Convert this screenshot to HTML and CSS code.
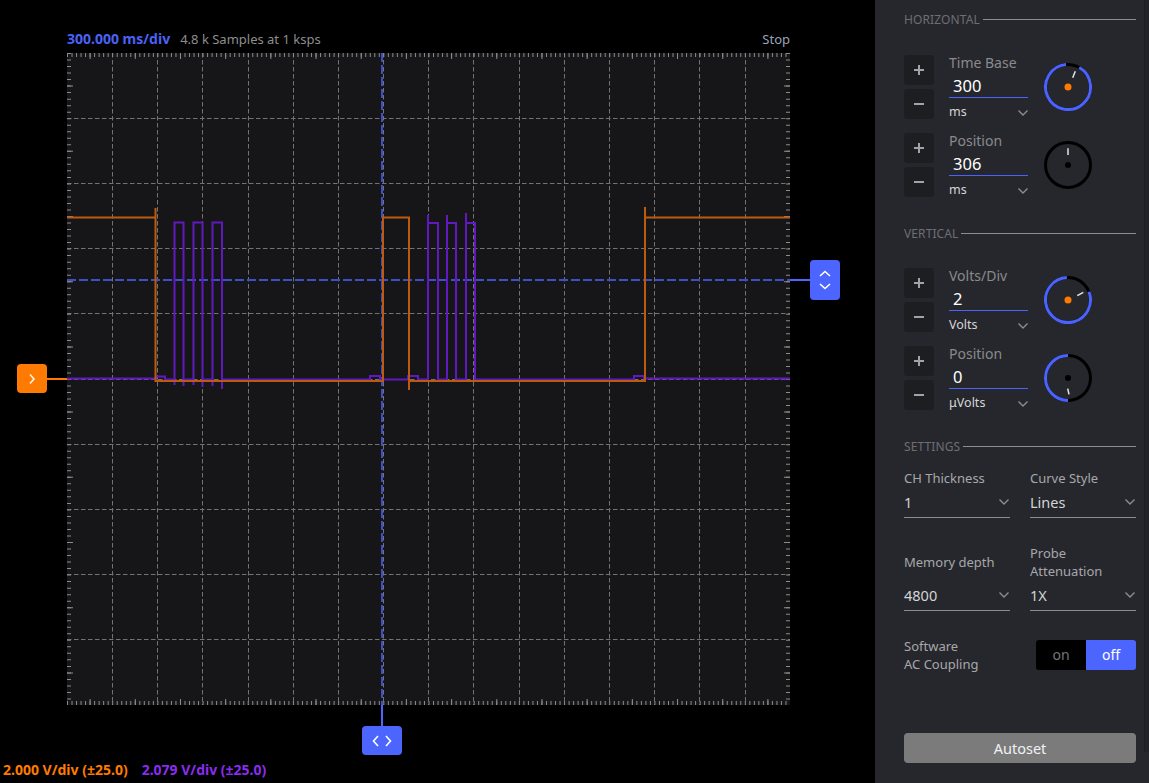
FILE: index.html
```html
<!DOCTYPE html>
<html>
<head>
<meta charset="utf-8">
<title>Scope</title>
<link rel="stylesheet" href="styles.css">
</head>
<body>
<div class="app">
  <section class="scope">
    <div class="scope-head">
      <div><span class="tb">300.000 ms/div</span><span class="samples">4.8 k Samples at 1 ksps</span></div>
      <span class="state">Stop</span>
    </div>
    <div class="plot">
      <svg class="plot-svg" viewBox="67 53 723 652" width="723" height="652">
        <rect x="67" y="53" width="723" height="652" fill="#161619"/>
        <g class="grid" fill="none" stroke="#727272" stroke-width="1" stroke-dasharray="4.5 2.5">
          <path d="M112.5,53V705M157.5,53V705M202.5,53V705M248.5,53V705M293.5,53V705M338.5,53V705M383.5,53V705M428.5,53V705M473.5,53V705M519.5,53V705M564.5,53V705M609.5,53V705M654.5,53V705M699.5,53V705M745.5,53V705"/>
          <path d="M67,118.5H790M67,183.5H790M67,248.5H790M67,313.5H790M67,379.5H790M67,444.5H790M67,509.5H790M67,574.5H790M67,639.5H790"/>
        </g>
        <g class="ticks" fill="none" stroke="#8c8c8c">
          <line x1="67" y1="55" x2="790" y2="55" stroke-width="4" stroke-dasharray="1 3.51875"/>
          <line x1="67" y1="56" x2="790" y2="56" stroke-width="6" stroke-dasharray="1 44.1875" stroke-dashoffset="-22.6"/>
          <line x1="67" y1="703" x2="790" y2="703" stroke-width="4" stroke-dasharray="1 3.51875"/>
          <line x1="67" y1="702" x2="790" y2="702" stroke-width="6" stroke-dasharray="1 44.1875" stroke-dashoffset="-22.6"/>
          <line x1="69" y1="53" x2="69" y2="705" stroke-width="4" stroke-dasharray="1 5.52"/>
          <line x1="70" y1="53" x2="70" y2="705" stroke-width="6" stroke-dasharray="1 64.2" stroke-dashoffset="-32.6"/>
          <line x1="788" y1="53" x2="788" y2="705" stroke-width="4" stroke-dasharray="1 5.52"/>
          <line x1="787" y1="53" x2="787" y2="705" stroke-width="6" stroke-dasharray="1 64.2" stroke-dashoffset="-32.6"/>
        </g>
        <g fill="none" stroke="#3c4fc8" stroke-width="2" stroke-dasharray="9 3">
          <line x1="67" y1="280" x2="790" y2="280"/>
          <line x1="382" y1="53" x2="382" y2="705"/>
        </g>
        <path class="trace-ch2" fill="none" stroke="#6019c2" stroke-width="2" d="M67,378.5H156V376.5H165V379.5H174.5V385V222.5H183.5V386V379.5H193.5V385V222.5H202.5V387V379.5H212.5V386V222.5H222V389V379.5H370V376H380V379.5H408V376H418V379.5H428V215V223H438V380V379.5H447V215V223H456V380V379.5H466V213V223H475V379.5H634V376H644V378.5H790"/>
        <path class="trace-ch1" fill="none" stroke="#bd5a10" stroke-width="2" d="M67,217.5H155.5V208V381H383V217.5H409V390V381H645V207V217.5H790"/>
      </svg>

      <div class="lead ch1-lead"></div>
      <div class="ch1-marker">
        <svg width="8" height="12" viewBox="0 0 8 12"><polyline points="2,1.5 6,6 2,10.5" fill="none" stroke="#fff4e6" stroke-width="1.6"/></svg>
      </div>

      <div class="lead lvl-lead"></div>
      <div class="trig-level">
        <svg width="14" height="22" viewBox="0 0 14 22"><polyline points="2,7 7,2.5 12,7" fill="none" stroke="#fff" stroke-width="1.6"/><polyline points="2,15 7,19.5 12,15" fill="none" stroke="#fff" stroke-width="1.6"/></svg>
      </div>

      <div class="lead pos-lead"></div>
      <div class="trig-pos">
        <svg width="22" height="14" viewBox="0 0 22 14"><polyline points="7,2 2.5,7 7,12" fill="none" stroke="#fff" stroke-width="1.6"/><polyline points="15,2 19.5,7 15,12" fill="none" stroke="#fff" stroke-width="1.6"/></svg>
      </div>
    </div>
    <div class="scope-foot">
      <span class="ch1">2.000 V/div (±25.0)</span>
      <span class="ch2">2.079 V/div (±25.0)</span>
    </div>
  </section>

  <aside class="panel">
    <div class="scrollbar"></div>
    <div class="sec">HORIZONTAL</div>

    <div class="ctrl first">
      <div class="steps">
        <div class="step"><svg width="12" height="12" viewBox="0 0 12 12"><path d="M1,6H11M6,1V11" stroke="#a3a3a3" stroke-width="2"/></svg></div>
        <div class="step"><svg width="12" height="12" viewBox="0 0 12 12"><path d="M1,6H11" stroke="#a3a3a3" stroke-width="2"/></svg></div>
      </div>
      <div class="field">
        <div class="flabel">Time Base</div>
        <div class="finput">300</div>
        <div class="funits"><span>ms</span><svg width="10" height="6" viewBox="0 0 10 6"><polyline points="0.5,0.5 5,5 9.5,0.5" fill="none" stroke="#8d8d8d" stroke-width="1.4"/></svg></div>
      </div>
      <svg class="knob" width="50" height="50" viewBox="0 0 50 50">
        <circle cx="25" cy="25" r="22.5" fill="none" stroke="#000" stroke-width="3"/>
        <path d="M36.25,5.51A22.5,22.5 0 1 1 23.04,2.59" fill="none" stroke="#4a63ff" stroke-width="3"/>
        <line x1="29.7" y1="15.7" x2="32.3" y2="9.3" stroke="#e4e4e4" stroke-width="1.5"/>
        <circle cx="25" cy="25" r="3.5" fill="#ff7a00"/>
      </svg>
    </div>

    <div class="ctrl">
      <div class="steps">
        <div class="step"><svg width="12" height="12" viewBox="0 0 12 12"><path d="M1,6H11M6,1V11" stroke="#a3a3a3" stroke-width="2"/></svg></div>
        <div class="step"><svg width="12" height="12" viewBox="0 0 12 12"><path d="M1,6H11" stroke="#a3a3a3" stroke-width="2"/></svg></div>
      </div>
      <div class="field">
        <div class="flabel">Position</div>
        <div class="finput">306</div>
        <div class="funits"><span>ms</span><svg width="10" height="6" viewBox="0 0 10 6"><polyline points="0.5,0.5 5,5 9.5,0.5" fill="none" stroke="#8d8d8d" stroke-width="1.4"/></svg></div>
      </div>
      <svg class="knob" width="50" height="50" viewBox="0 0 50 50">
        <circle cx="25" cy="25" r="22.5" fill="none" stroke="#000" stroke-width="3"/>
        <line x1="25" y1="15" x2="25" y2="8.3" stroke="#e4e4e4" stroke-width="1.5"/>
        <circle cx="25" cy="25" r="3" fill="#000"/>
      </svg>
    </div>

    <div class="sec sec-gap">VERTICAL</div>

    <div class="ctrl first-v">
      <div class="steps">
        <div class="step"><svg width="12" height="12" viewBox="0 0 12 12"><path d="M1,6H11M6,1V11" stroke="#a3a3a3" stroke-width="2"/></svg></div>
        <div class="step"><svg width="12" height="12" viewBox="0 0 12 12"><path d="M1,6H11" stroke="#a3a3a3" stroke-width="2"/></svg></div>
      </div>
      <div class="field">
        <div class="flabel">Volts/Div</div>
        <div class="finput">2</div>
        <div class="funits"><span>Volts</span><svg width="10" height="6" viewBox="0 0 10 6"><polyline points="0.5,0.5 5,5 9.5,0.5" fill="none" stroke="#8d8d8d" stroke-width="1.4"/></svg></div>
      </div>
      <svg class="knob" width="50" height="50" viewBox="0 0 50 50">
        <circle cx="25" cy="25" r="22.5" fill="none" stroke="#000" stroke-width="3"/>
        <path d="M45.95,16.79A22.5,22.5 0 1 1 23.82,2.53" fill="none" stroke="#4a63ff" stroke-width="3"/>
        <line x1="34.3" y1="20.7" x2="40.3" y2="17.3" stroke="#e4e4e4" stroke-width="1.5"/>
        <circle cx="25" cy="25" r="3.5" fill="#ff7a00"/>
      </svg>
    </div>

    <div class="ctrl">
      <div class="steps">
        <div class="step"><svg width="12" height="12" viewBox="0 0 12 12"><path d="M1,6H11M6,1V11" stroke="#a3a3a3" stroke-width="2"/></svg></div>
        <div class="step"><svg width="12" height="12" viewBox="0 0 12 12"><path d="M1,6H11" stroke="#a3a3a3" stroke-width="2"/></svg></div>
      </div>
      <div class="field">
        <div class="flabel">Position</div>
        <div class="finput">0</div>
        <div class="funits"><span>μVolts</span><svg width="10" height="6" viewBox="0 0 10 6"><polyline points="0.5,0.5 5,5 9.5,0.5" fill="none" stroke="#8d8d8d" stroke-width="1.4"/></svg></div>
      </div>
      <svg class="knob" width="50" height="50" viewBox="0 0 50 50">
        <circle cx="25" cy="25" r="22.5" fill="none" stroke="#000" stroke-width="3"/>
        <path d="M25,47.5A22.5,22.5 0 0 1 25,2.5" fill="none" stroke="#4a63ff" stroke-width="3"/>
        <line x1="24.7" y1="35.7" x2="26" y2="41.3" stroke="#e4e4e4" stroke-width="1.5"/>
        <circle cx="25" cy="25" r="3" fill="#000"/>
      </svg>
    </div>

    <div class="sec sec-gap">SETTINGS</div>

    <div class="settings">
      <div class="slabel">CH Thickness</div>
      <div class="slabel">Curve Style</div>
      <div class="select"><span>1</span><svg width="10" height="6" viewBox="0 0 10 6"><polyline points="0.5,0.5 5,5 9.5,0.5" fill="none" stroke="#8d8d8d" stroke-width="1.4"/></svg></div>
      <div class="select"><span>Lines</span><svg width="10" height="6" viewBox="0 0 10 6"><polyline points="0.5,0.5 5,5 9.5,0.5" fill="none" stroke="#8d8d8d" stroke-width="1.4"/></svg></div>
      <div class="slabel row2">Memory depth</div>
      <div class="slabel row2">Probe<br>Attenuation</div>
      <div class="select"><span>4800</span><svg width="10" height="6" viewBox="0 0 10 6"><polyline points="0.5,0.5 5,5 9.5,0.5" fill="none" stroke="#8d8d8d" stroke-width="1.4"/></svg></div>
      <div class="select"><span>1X</span><svg width="10" height="6" viewBox="0 0 10 6"><polyline points="0.5,0.5 5,5 9.5,0.5" fill="none" stroke="#8d8d8d" stroke-width="1.4"/></svg></div>
    </div>

    <div class="coupling">
      <div class="slabel">Software<br>AC Coupling</div>
      <div class="toggle"><span class="t-on">on</span><span class="t-off">off</span></div>
    </div>

    <div class="autoset">Autoset</div>
  </aside>
</div>
</body>
</html>
```

FILE: styles.css
```css
* { box-sizing: border-box; }
html, body { margin: 0; padding: 0; }
body {
  width: 1149px;
  height: 783px;
  overflow: hidden;
  background: #000;
  font-family: "Noto Sans", "Open Sans", sans-serif;
}
.app { display: flex; height: 783px; }

/* ---------- scope ---------- */
.scope {
  width: 875px;
  flex: none;
  padding: 30px 85px 0 67px;
}
.scope-head {
  display: flex;
  justify-content: space-between;
  align-items: center;
  height: 18px;
  line-height: 18px;
  font-size: 14px;
  margin-bottom: 5px;
  white-space: nowrap;
}
.tb { color: #4a62f5; font-weight: 700; }
.samples { color: #8e8e8e; margin-left: 10px; font-size: 13px; }
.state { color: #9aa4b8; font-size: 13px; }

.plot { position: relative; width: 723px; height: 652px; }
.plot-svg { display: block; width: 723px; height: 652px; }

.lead { position: absolute; }
.ch1-lead { left: -20px; top: 325px; width: 20px; height: 2px; background: #ff7a00; }
.ch1-marker {
  position: absolute;
  left: -50px; top: 311px;
  width: 30px; height: 29px;
  background: #ff7a00;
  border-radius: 4px;
  display: flex; align-items: center; justify-content: center;
}
.lvl-lead { left: 723px; top: 226px; width: 20px; height: 2px; background: #4d65ff; }
.trig-level {
  position: absolute;
  left: 743px; top: 207px;
  width: 30px; height: 40px;
  background: #4d65ff;
  border-radius: 4px;
  display: flex; align-items: center; justify-content: center;
}
.pos-lead { left: 314px; top: 652px; width: 2px; height: 21px; background: #4d65ff; }
.trig-pos {
  position: absolute;
  left: 295px; top: 673px;
  width: 40px; height: 29px;
  background: #4d65ff;
  border-radius: 4px;
  display: flex; align-items: center; justify-content: center;
}
.trig-level svg, .trig-pos svg, .ch1-marker svg { display: block; }

.scope-foot {
  margin: 56px 0 0 -64px;
  display: flex;
  gap: 14px;
  height: 18px;
  line-height: 18px;
  font-size: 14px;
  font-weight: 700;
  white-space: nowrap;
}
.ch1 { color: #ff7a00; }
.ch2 { color: #8a2cf0; }

/* ---------- panel ---------- */
.panel {
  position: relative;
  width: 274px;
  flex: none;
  height: 783px;
  background: #26272c;
  padding: 11px 13px 0 29px;
}
.scrollbar {
  position: absolute;
  right: 0; top: 0;
  width: 5px; height: 752px;
  background: #222328;
  border-left: 1px solid #1d1e22;
}
.sec {
  display: flex;
  align-items: center;
  gap: 3px;
  height: 16px;
  font-size: 12px;
  color: #6d6e74;
  letter-spacing: 0.1px;
}
.sec::after {
  content: "";
  flex: 1;
  height: 1px;
  background: #8b8c91;
}
.sec-gap { margin-top: 28px; }

.ctrl { display: flex; height: 64px; margin-top: 14px; }
.ctrl.first { margin-top: 28px; }
.ctrl.first-v { margin-top: 27px; }
.steps { display: flex; flex-direction: column; gap: 4px; }
.step {
  width: 30px; height: 30px;
  background: #1d1e22;
  border-radius: 3px;
  display: flex; align-items: center; justify-content: center;
}
.step svg { display: block; }
.field { margin-left: 15px; width: 79px; }
.flabel { font-size: 14px; line-height: 16px; color: #8a8a8e; white-space: nowrap; }
.finput {
  font-size: 16.5px;
  line-height: 20px;
  padding: 5px 0 1px 4px;
  color: #fff;
  border-bottom: 1px solid #4a63ff;
}
.funits {
  margin-top: 6px;
  height: 16px;
  line-height: 16px;
  font-size: 12.5px;
  color: #d6d6d6;
  display: flex;
  justify-content: space-between;
  align-items: center;
}
.funits svg { display: block; margin-top: 1px; }
.knob { display: block; margin: 7px 0 0 15px; }

.settings {
  margin-top: 15px;
  display: grid;
  grid-template-columns: 1fr 1fr;
  column-gap: 20px;
}
.slabel {
  display: flex;
  align-items: center;
  font-size: 13px;
  line-height: 18px;
  color: #a7a7ab;
}
.slabel.row2 { margin-top: 26px; }
.select {
  display: flex;
  justify-content: space-between;
  align-items: center;
  padding: 6px 1px 6px 0;
  line-height: 18px;
  font-size: 14.5px;
  color: #d4d4d6;
  border-bottom: 1px solid #8a8b90;
}
.select svg { display: block; }

.coupling {
  margin-top: 26px;
  display: flex;
  justify-content: space-between;
  align-items: center;
}
.toggle {
  display: flex;
  width: 100px; height: 30px;
  border-radius: 3px;
  overflow: hidden;
  font-size: 14px;
  line-height: 30px;
  text-align: center;
}
.t-on { flex: 1; background: #000; color: #75767b; }
.t-off { flex: 1; background: #4d65ff; color: #fff; }

.autoset {
  margin-top: 60px;
  height: 30px;
  line-height: 30px;
  border-radius: 4px;
  background: #7b7b7b;
  color: #f2f2f2;
  text-align: center;
  font-size: 14.5px;
}
```
